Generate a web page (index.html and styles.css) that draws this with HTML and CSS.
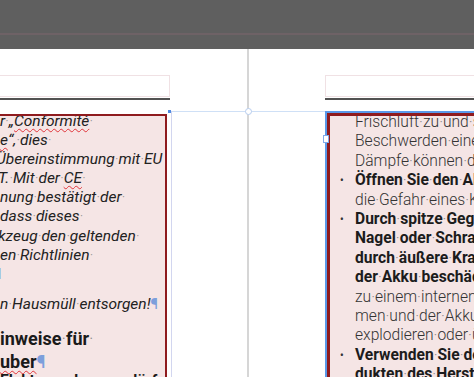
FILE: index.html
```html
<!DOCTYPE html>
<html lang="de">
<head>
    <meta charset="UTF-8">
    <title>Layout Ansicht</title>
    <link rel="stylesheet" href="styles.css">
</head>
<body>
    <div class="toolbar">
        <div class="toolbar-rule"></div>
    </div>

    <div class="spread">
        <div class="page page-left">
            <div class="header-box"></div>
            <div class="header-rule"></div>
            <div class="frame frame-left">
                <div class="text-left">
                    <div class="line">r<span class="sp">·</span>„<span class="typo">Conformité</span><span class="sp">·</span></div>
                    <div class="line"><span class="typo">e</span>“,<span class="sp">·</span>dies<span class="sp">·</span></div>
                    <div class="line cut-4">Übereinstimmung<span class="sp">·</span>mit<span class="sp">·</span>EU</div>
                    <div class="line cut-2">T.<span class="sp">·</span>Mit<span class="sp">·</span>der<span class="sp">·</span><span class="typo">CE</span><span class="sp">·</span></div>
                    <div class="line">nung<span class="sp">·</span>bestätigt<span class="sp">·</span>der<span class="sp">·</span></div>
                    <div class="line">dass<span class="sp">·</span>dieses<span class="sp">·</span></div>
                    <div class="line cut-2">kzeug<span class="sp">·</span>den<span class="sp">·</span>geltenden<span class="sp">·</span></div>
                    <div class="line">en<span class="sp">·</span>Richtlinien<span class="sp">·</span></div>
                    <div class="line cut-5"><span class="pilcrow">¶</span></div>
                    <div class="line para">n<span class="sp">·</span>Hausmüll<span class="sp">·</span>entsorgen!<span class="pilcrow">¶</span></div>
                    <div class="heading">
                        <div>inweise<span class="sp">·</span>für<span class="sp">·</span></div>
                        <div><span class="typo">uber</span><span class="pilcrow">¶</span></div>
                    </div>
                    <div class="line strong">Elektrowerkzeuge<span class="sp">·</span>dürfen</div>
                </div>
            </div>
        </div>

        <div class="spine"></div>

        <div class="page page-right">
            <div class="header-box"></div>
            <div class="header-rule"></div>
            <div class="frame-select">
                <div class="frame frame-right">
                    <div class="text-right">
                        <div class="line">Frischluft<span class="sp">·</span>zu<span class="sp">·</span>und<span class="sp">·</span>suchen<span class="sp">·</span>Sie</div>
                        <div class="line">Beschwerden<span class="sp">·</span>einen<span class="sp">·</span>Arzt<span class="sp">·</span>auf.</div>
                        <div class="line">Dämpfe<span class="sp">·</span>können<span class="sp">·</span>die<span class="sp">·</span>Atemwege</div>
                        <div class="item">
                            <span class="mark">•</span>
                            <div>
                                <div class="line"><b>Öffnen<span class="sp">·</span>Sie<span class="sp">·</span>den<span class="sp">·</span>Akku<span class="sp">·</span>nicht.</b></div>
                                <div class="line">die<span class="sp">·</span>Gefahr<span class="sp">·</span>eines<span class="sp">·</span>Kurzschlusses.</div>
                            </div>
                        </div>
                        <div class="item">
                            <span class="mark">•</span>
                            <div>
                                <div class="line"><b>Durch<span class="sp">·</span>spitze<span class="sp">·</span>Gegenstände</b></div>
                                <div class="line"><b>Nagel<span class="sp">·</span>oder<span class="sp">·</span>Schraubendreher</b></div>
                                <div class="line"><b>durch<span class="sp">·</span>äußere<span class="sp">·</span>Krafteinwirkung</b></div>
                                <div class="line"><b>der<span class="sp">·</span>Akku<span class="sp">·</span>beschädigt</b></div>
                                <div class="line">zu<span class="sp">·</span>einem<span class="sp">·</span>internen<span class="sp">·</span>Kurzschluss</div>
                                <div class="line">men<span class="sp">·</span>und<span class="sp">·</span>der<span class="sp">·</span>Akku<span class="sp">·</span>brennen,</div>
                                <div class="line">explodieren<span class="sp">·</span>oder<span class="sp">·</span>überhitzen.</div>
                            </div>
                        </div>
                        <div class="item">
                            <span class="mark">•</span>
                            <div>
                                <div class="line"><b>Verwenden<span class="sp">·</span>Sie<span class="sp">·</span>den<span class="sp">·</span>Akku</b></div>
                                <div class="line"><b>dukten<span class="sp">·</span>des<span class="sp">·</span>Herstellers.</b></div>
                            </div>
                        </div>
                    </div>
                </div>
            </div>
        </div>

        <!-- Hilfslinien und Griffe liegen über dem Layout -->
        <div class="guide-h"></div>
        <div class="guide-v"></div>
        <div class="guide-point"></div>
        <div class="corner-dot"></div>
        <div class="handle"></div>
    </div>
</body>
</html>
```

FILE: styles.css
```css
body {
    margin: 0;
    padding: 0;
    width: 474px;
    height: 377px;
    overflow: hidden;
    background-color: #ffffff;
    font-family: 'Roboto', 'Liberation Sans', sans-serif;
    color: #222;
}

.toolbar {
    height: 49px;
    background-color: #5f5f5f;
    overflow: hidden;
}

.toolbar-rule {
    margin-top: 33px;
    height: 2px;
    background-color: #6e6266;
}

.spread {
    position: relative;
    display: flex;
    height: 328px;
}

.page {
    display: flex;
    flex-direction: column;
    padding-top: 26px;
    overflow: hidden;
    box-sizing: border-box;
}

.page-left {
    width: 247px;
}

.page-right {
    flex: 1;
    padding-left: 76px;
}

.spine {
    width: 2px;
    background-color: #d6d6d6;
}

.header-box {
    height: 22px;
    border: 1px solid #f0e1e4;
    box-sizing: border-box;
    flex: none;
}

.header-rule {
    margin-top: 1px;
    height: 2px;
    background-color: #525252;
    flex: none;
}

.page-left .header-box,
.page-left .header-rule {
    margin-left: -10px;
    width: 180px;
}

.page-right .header-box,
.page-right .header-rule {
    margin-right: -20px;
}

.frame {
    flex: 1;
    background-color: #f5e5e5;
    overflow: hidden;
    box-sizing: border-box;
}

.frame-left {
    margin-top: 14px;
    margin-left: -20px;
    width: 187px;
    border: 2px solid #8f1b1e;
    border-bottom: none;
}

.frame-select {
    flex: 1;
    display: flex;
    margin-top: 11px;
    margin-right: -20px;
    border-top: 2px solid #5b99e9;
    border-left: 2px solid #5b99e9;
}

.frame-right {
    border-top: 3px solid #8f1b1e;
    border-left: 3px solid #8f1b1e;
}

.line {
    white-space: nowrap;
}

.sp {
    color: #8d8d8d;
    font-weight: 300;
}

.typo {
    text-decoration: underline wavy #e0343a;
    text-decoration-thickness: 1px;
    text-underline-offset: 2px;
}

.pilcrow {
    color: #7d9fdc;
    font-style: normal;
}

/* linke Seite: kursiver Fließtext */
.text-left {
    margin-top: -4px;
    padding-left: 18px;
    font-size: 15.5px;
    line-height: 19.1px;
    font-style: italic;
    color: #222;
}

.cut-2 { margin-left: -2px; }
.cut-4 { margin-left: -4px; }
.cut-5 { margin-left: -6px; }

.para {
    margin-top: 11px;
}

.heading {
    margin-top: 13px;
    font-size: 18px;
    line-height: 23px;
    font-weight: 700;
    font-style: normal;
    color: #1a1a1a;
    white-space: nowrap;
}

.strong {
    font-weight: 700;
    font-style: normal;
    color: #1a1a1a;
    margin-top: -2px;
}

/* rechte Seite */
.text-right {
    margin-top: -3px;
    padding-left: 25px;
    font-size: 15.6px;
    line-height: 19.4px;
    font-weight: 300;
    color: #333;
}

.text-right b {
    font-weight: 700;
    color: #1c1c1c;
}

.item {
    display: flex;
    margin-left: -15px;
}

.mark {
    flex: none;
    width: 15px;
    font-size: 10px;
    font-weight: 700;
    line-height: 19.4px;
    text-align: left;
    color: #333;
}

.guide-h {
    position: absolute;
    top: 62px;
    left: 170px;
    width: 155px;
    height: 1px;
    background-color: #cfe0f6;
}

.guide-v {
    position: absolute;
    top: 62px;
    bottom: 0;
    left: 171px;
    width: 1px;
    background-color: #d2d6ef;
}

.guide-point {
    position: absolute;
    top: 59px;
    left: 245px;
    width: 5px;
    height: 5px;
    border: 1px solid #b7cdee;
    border-radius: 50%;
    background-color: #fff;
}

.corner-dot {
    position: absolute;
    top: 61px;
    left: 168px;
    width: 3px;
    height: 3px;
    background-color: #4f8ae2;
}

.handle {
    position: absolute;
    top: 86px;
    left: 323px;
    width: 4px;
    height: 6px;
    border: 1px solid #80aaea;
    background-color: #fff;
}
```
